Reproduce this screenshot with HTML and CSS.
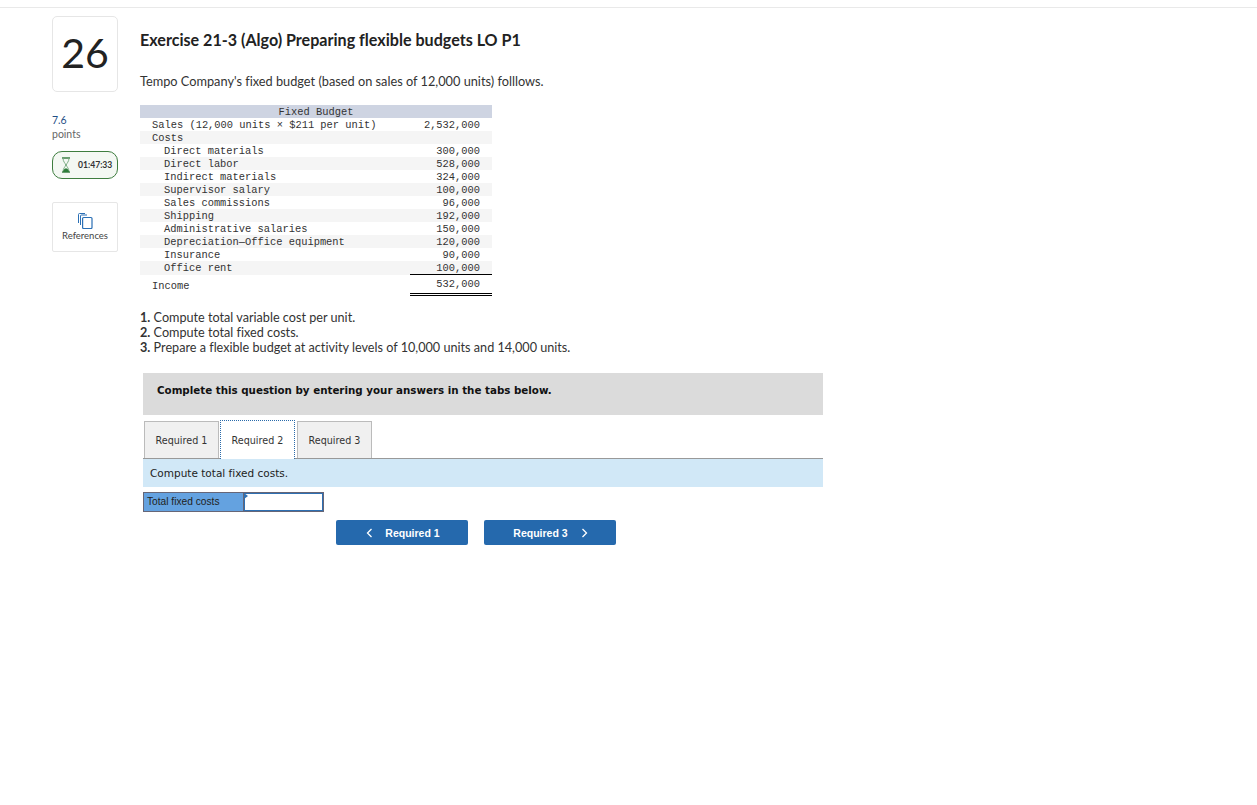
FILE: index.html
```html
<!DOCTYPE html>
<html lang="en">
<head>
<meta charset="utf-8">
<title>Exercise 21-3</title>
<link rel="stylesheet" href="styles.css">
</head>
<body>
<div class="page">
  <aside class="side">
    <div class="qnum">26</div>
    <div class="pts"><div class="pts-val">7.6</div><div class="pts-lbl">points</div></div>
    <div class="timer">
      <svg width="10" height="16" viewBox="0 0 10 16"><path d="M1 1h8M1 15h8" fill="none" stroke="#3e8048" stroke-width="1.400"/><path d="M2 1c0 3.800 2.200 5 2.800 7C4.200 10 2 11.200 2 15M8 1c0 3.800-2.200 5-2.800 7C5.800 10 8 11.200 8 15" fill="none" stroke="#7fae86" stroke-width="1"/><path d="M2 15c0-2 1.500-3.200 3-3.800 1.500.6 3 1.800 3 3.800z" fill="#2f7d3b"/></svg>
      <span>01:47:33</span>
    </div>
    <div class="refs">
      <svg width="16" height="17" viewBox="0 0 16 17"><path d="M1.500 11V2.500a1 1 0 0 1 1-1H8M3.500 13V4a1 1 0 0 1 1-1H10" fill="none" stroke="#2a6fb5" stroke-width="1"/><rect x="5.600" y="5.500" width="9.400" height="11" rx="1" fill="#fff" stroke="#2a6fb5" stroke-width="1.200"/></svg>
      <span>References</span>
    </div>
  </aside>
  <main class="main">
    <h1 class="title">Exercise 21-3 (Algo) Preparing flexible budgets LO P1</h1>
    <p class="intro">Tempo Company's fixed budget (based on sales of 12,000 units) folllows.</p>
    <table class="budget">
      <colgroup><col class="c1"><col class="c2"><col class="c3"></colgroup>
      <tr class="hd"><th colspan="3">Fixed Budget</th></tr>
      <tr><td class="i1">Sales (12,000 units × $211 per unit)</td><td></td><td class="n">2,532,000</td></tr>
      <tr class="alt"><td class="i1">Costs</td><td></td><td></td></tr>
      <tr><td class="i2">Direct materials</td><td></td><td class="n">300,000</td></tr>
      <tr class="alt"><td class="i2">Direct labor</td><td></td><td class="n">528,000</td></tr>
      <tr><td class="i2">Indirect materials</td><td></td><td class="n">324,000</td></tr>
      <tr class="alt"><td class="i2">Supervisor salary</td><td></td><td class="n">100,000</td></tr>
      <tr><td class="i2">Sales commissions</td><td></td><td class="n">96,000</td></tr>
      <tr class="alt"><td class="i2">Shipping</td><td></td><td class="n">192,000</td></tr>
      <tr><td class="i2">Administrative salaries</td><td></td><td class="n">150,000</td></tr>
      <tr class="alt"><td class="i2">Depreciation—Office equipment</td><td></td><td class="n">120,000</td></tr>
      <tr><td class="i2">Insurance</td><td></td><td class="n">90,000</td></tr>
      <tr class="alt"><td class="i2 low">Office rent</td><td></td><td class="n sum">100,000</td></tr>
      <tr class="inc"><td class="i1 low2">Income</td><td></td><td class="n dbl">532,000</td></tr>
    </table>
    <ol class="steps">
      <li><b>1.</b> Compute total variable cost per unit.</li>
      <li><b>2.</b> Compute total fixed costs.</li>
      <li><b>3.</b> Prepare a flexible budget at activity levels of 10,000 units and 14,000 units.</li>
    </ol>
    <div class="widget">
      <div class="banner">Complete this question by entering your answers in the tabs below.</div>
      <div class="tabs">
        <div class="tab">Required 1</div>
        <div class="tab active">Required 2</div>
        <div class="tab">Required 3</div>
      </div>
      <div class="prompt">Compute total fixed costs.</div>
      <div class="answer">
        <div class="answer-lbl">Total fixed costs</div>
        <div class="answer-box"><i class="flag"></i></div>
      </div>
      <div class="nav">
        <div class="btn btn-prev"><svg width="7" height="10" viewBox="0 0 7 10"><path d="M5.500 1L1.500 5l4 4" fill="none" stroke="#fff" stroke-width="1.300"/></svg><span>Required 1</span></div>
        <div class="btn btn-next"><span>Required 3</span><svg width="7" height="10" viewBox="0 0 7 10"><path d="M1.500 1l4 4-4 4" fill="none" stroke="#fff" stroke-width="1.300"/></svg></div>
      </div>
    </div>
  </main>
</div>
</body>
</html>
```
FILE: styles.css
```css
* { box-sizing: border-box; }
html, body { margin: 0; padding: 0; background: #fff; }
body { font-family: Lato, "Open Sans", sans-serif; color: #222; font-variant-ligatures: none; }
.page { border-top: 1px solid #e9e9e9; margin-top: 7px; padding: 8px 0 0 52px; display: flex; gap: 22px; }
.side { width: 66px; flex: none; }
.qnum { height: 76px; padding-bottom: 4px; border: 1px solid #e6e6e6; border-radius: 5px; display: flex; align-items: center; justify-content: center; font-size: 41px; color: #222; }
.pts { margin-top: 21px; line-height: 14px; font-size: 10.500px; }
.pts-val { color: #1f4f86; }
.pts-lbl { color: #666; }
.timer { margin-top: 10px; height: 28px; border: 1px solid #3e7d3f; border-radius: 10px; background: #f4f8f3; display: flex; align-items: center; padding-left: 8px; gap: 7px; font-size: 8.600px; font-weight: 700; color: #333; }
.refs { margin-top: 23px; height: 50px; border: 1px solid #e6e6e6; border-radius: 2px; display: flex; flex-direction: column; align-items: center; padding-top: 9px; gap: 1px; font-size: 9.500px; color: #444; }
.main { width: 683px; flex: none; }
.title { margin: 14px 0 0; font-size: 16.100px; line-height: 20px; font-weight: 700; color: #222; }
.intro { margin: 22px 0 0; font-size: 12.750px; line-height: 18px; color: #333; }
.budget { margin-top: 15px; width: 352px; border-collapse: collapse; table-layout: fixed; font-family: "Liberation Mono", monospace; font-size: 10.400px; color: #333; }
.c1 { width: 258px; }
.c2 { width: 12px; }
.c3 { width: 82px; }
.budget td, .budget th { padding: 1px 0 0; height: 13px; line-height: 12px; white-space: nowrap; font-weight: 400; }
.hd { background: #ced4e2; }
.alt { background: #f5f5f5; }
.i1 { padding-left: 12px !important; }
.i2 { padding-left: 24px !important; }
.n { text-align: right; padding-right: 12px !important; }
.budget td.low { padding-top: 2px; line-height: 11px; }
.sum { border-bottom: 1px solid #000; }
.budget .inc td { height: 20px; padding-top: 0; line-height: 16px; }
.budget .inc td.low2 { padding-top: 2px; line-height: 18px; }
.dbl { border-bottom: 3px double #000; }
.steps { list-style: none; margin: 14px 0 0; padding: 0; font-size: 12.650px; line-height: 15px; color: #333; }
.steps b { font-weight: 700; }
.widget { margin: 18px 0 0 3px; width: 680px; }
.banner { height: 42px; background: #dbdbdb; padding: 0 0 8px 14px; display: flex; align-items: center; font-family: "DejaVu Sans", sans-serif; font-size: 10.300px; font-weight: 700; color: #111; }
.tabs { margin-top: 6px; height: 38px; display: flex; padding-left: 1px; gap: 1px; border-bottom: 1px solid #999; font-family: "DejaVu Sans", sans-serif; font-size: 9.600px; color: #333; }
.tab { width: 75px; border: 1px solid #bbb; border-bottom: 0; background: #f0f0f0; display: flex; align-items: center; justify-content: center; }
.tab.active { background: #fff; border: 1px dotted #2a6aaa; border-bottom: 0; margin: -1px 1px -1px 0; }
.prompt { height: 28px; background: #d1e8f7; padding-left: 7px; display: flex; align-items: center; font-family: "DejaVu Sans", sans-serif; font-size: 10.500px; color: #222; }
.answer { margin-top: 5px; width: 181px; height: 20px; display: flex; }
.answer-lbl { width: 100px; background: #64a2e0; border: 1px solid #667; border-right: 0; padding-left: 3px; line-height: 17px; font-family: "Liberation Sans", sans-serif; font-size: 10.200px; color: #222; }
.answer-box { position: relative; flex: 1; border: 2px solid #2e6fb2; outline: 1px solid #667; outline-offset: -1px; background: #fff; }
.flag { position: absolute; left: -1px; top: -1px; border-left: 4px solid #2e6fb2; border-top: 3px solid transparent; border-bottom: 3px solid transparent; }
.nav { margin-top: 8px; display: flex; justify-content: center; gap: 16px; padding-right: 15px; }
.btn { width: 132px; height: 25px; background: #2569ad; border-radius: 2px; display: flex; align-items: center; justify-content: center; gap: 12px; font-family: "Liberation Sans", sans-serif; font-size: 10.500px; font-weight: 700; color: #fff; }
.btn-prev { padding-left: 3px; }
.btn-next { gap: 13px; padding-left: 2px; }
```
